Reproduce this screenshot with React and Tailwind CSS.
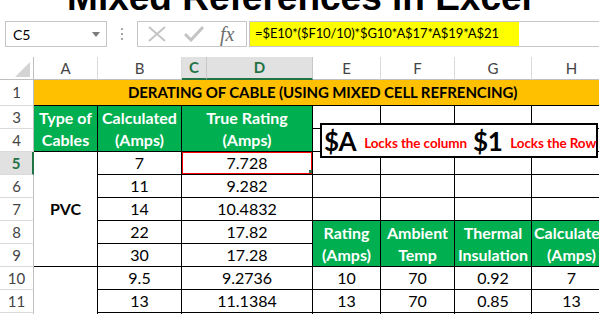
import React from "react"

const cellFont = "font-['Lato',_'Open_Sans',_sans-serif]"

const colLetters = [
  { label: "A", cls: "col-start-2" },
  { label: "B", cls: "col-start-3" },
  { label: "C", cls: "col-start-4", active: true },
  { label: "D", cls: "col-start-5", active: true },
  { label: "E", cls: "col-start-6" },
  { label: "F", cls: "col-start-7" },
  { label: "G", cls: "col-start-8" },
  { label: "H", cls: "col-start-9" },
]

const rowLabels = [
  { label: "1", cls: "row-start-2" },
  { label: "3", cls: "row-start-3" },
  { label: "4", cls: "row-start-4" },
  { label: "5", cls: "row-start-5", active: true },
  { label: "6", cls: "row-start-6" },
  { label: "7", cls: "row-start-7" },
  { label: "8", cls: "row-start-8" },
  { label: "9", cls: "row-start-9" },
  { label: "10", cls: "row-start-10" },
  { label: "11", cls: "row-start-11" },
  { label: "12", cls: "row-start-12" },
]

// rows 5..12 of the data block
const dataRows = [
  { row: "row-start-5", calc: "7", rating: "7.728" },
  { row: "row-start-6", calc: "11", rating: "9.282" },
  { row: "row-start-7", calc: "14", rating: "10.4832" },
  { row: "row-start-8", calc: "22", rating: "17.82" },
  { row: "row-start-9", calc: "30", rating: "17.28" },
  { row: "row-start-10", calc: "9.5", rating: "9.2736" },
  { row: "row-start-11", calc: "13", rating: "11.1384" },
  { row: "row-start-12", calc: "", rating: "" },
]

const rightCols = ["col-start-6", "col-start-7", "col-start-8", "col-start-9"]
const blankRows = ["row-start-3", "row-start-4", "row-start-5", "row-start-6", "row-start-7", "row-start-12"]

const rightHeaders = [
  ["Rating", "(Amps)"],
  ["Ambient", "Temp"],
  ["Thermal", "Insulation"],
  ["Calculated", "(Amps)"],
]

const rightValues = [
  { row: "row-start-10", vals: ["10", "70", "0.92", "7"] },
  { row: "row-start-11", vals: ["13", "70", "0.85", "13"] },
]

const Cell = ({ className = "", children }) => (
  <div
    className={`flex items-center justify-center overflow-hidden whitespace-nowrap border-r border-b border-black text-[16px] text-black ${className}`}
  >
    {children}
  </div>
)

const GreenCell = ({ className = "", lines }) => (
  <Cell className={`flex-col bg-[#00b050] text-[15.5px] font-bold leading-[22px] text-white ${className}`}>
    {lines.map((line) => (
      <span key={line} className="block w-full text-center">
        {line}
      </span>
    ))}
  </Cell>
)

const FormulaBar = () => (
  <div className="mt-[5px] flex h-[26px] items-stretch font-['Lato',_sans-serif]">
    <div className="ml-[5px] flex w-[102px] items-center justify-between border border-[#c6c6c6] pl-[7px] pr-[6px] text-[14px] text-black">
      <span>C5</span>
      <svg width="8" height="5" viewBox="0 0 8 5">
        <polygon points="0,0 8,0 4,5" fill="#7a7a7a" />
      </svg>
    </div>
    <div className="flex w-[30px] flex-col items-center justify-center gap-[3px]">
      <span className="h-[2px] w-[2px] bg-[#a6a6a6]" />
      <span className="h-[2px] w-[2px] bg-[#a6a6a6]" />
      <span className="h-[2px] w-[2px] bg-[#a6a6a6]" />
    </div>
    <div className="flex w-[110px] items-center border border-[#c6c6c6]">
      <svg className="ml-[10px]" width="18" height="16" viewBox="0 0 18 16">
        <path d="M1 1 L17 15 M17 1 L1 15" stroke="#c4c4c4" strokeWidth="2" fill="none" />
      </svg>
      <svg className="ml-[18px]" width="20" height="16" viewBox="0 0 20 16">
        <path d="M1 8 L7 14 L19 1" stroke="#c4c4c4" strokeWidth="3" fill="none" />
      </svg>
      <span className="ml-[16px] font-['Liberation_Serif',_serif] text-[20px] italic leading-none text-[#6e6e6e]">
        fx
      </span>
    </div>
    <div className="ml-[2px] flex flex-1 items-stretch border-y border-l border-[#c6c6c6]">
      <div className="flex w-[269px] items-center overflow-hidden whitespace-nowrap bg-[#ffff00] pl-[5px] text-[13px] tracking-[-0.1px] text-black">
        =$E10*($F10/10)*$G10*A$17*A$19*A$21
      </div>
    </div>
  </div>
)

const App = () => {
  return (
    <div className="relative h-[314px] w-[599px] overflow-hidden bg-white">
      <div className="h-[16px] overflow-hidden">
        <div className="-mt-[21px] text-center font-['Liberation_Sans',_Arial,_sans-serif] text-[37px] font-bold leading-none text-black">
          Mixed References in Excel
        </div>
      </div>

      <FormulaBar />

      <div
        className={`mt-[10px] grid grid-cols-[34px_64px_84px_25px_106px_68px_74px_77px_80px] grid-rows-[23px_26px_repeat(10,23px)] ${cellFont}`}
      >
        {/* corner */}
        <div className="col-start-1 row-start-1 flex items-end justify-end border-r border-b border-[#bfbfbf] pr-[3px] pb-[2px]">
          <svg width="15" height="15" viewBox="0 0 15 15">
            <polygon points="15,0 15,15 0,15" fill="#d4d4d4" />
          </svg>
        </div>

        {colLetters.map((col) => (
          <div
            key={col.label}
            className={`${col.cls} row-start-1 flex items-center justify-center text-[15px] ${
              col.active
                ? "border-r border-b-2 border-r-[#c8c8c8] border-b-[#217346] bg-[#e1e1e1] font-bold text-[#217346]"
                : "border-r border-b border-r-[#dadada] border-b-[#bfbfbf] bg-white text-[#444]"
            }`}
          >
            {col.label}
          </div>
        ))}

        {rowLabels.map((row) => (
          <div
            key={row.label}
            className={`col-start-1 ${row.cls} flex items-center justify-center border-b border-b-[#dadada] text-[15px] ${
              row.active
                ? "border-r-2 border-r-[#217346] bg-[#e1e1e1] font-bold text-[#217346]"
                : "border-r border-r-[#bfbfbf] bg-white text-[#444]"
            }`}
          >
            {row.label}
          </div>
        ))}

        {/* row 1 banner */}
        <div className="col-span-8 col-start-2 row-start-2 flex items-center whitespace-nowrap border-b border-black bg-[#ffc000] pl-[94px] text-[15px] font-bold tracking-[-0.1px] text-black">
          DERATING OF CABLE (USING MIXED CELL REFRENCING)
        </div>

        {/* left table header */}
        <GreenCell className="col-start-2 row-span-2 row-start-3" lines={["Type of", "Cables"]} />
        <GreenCell className="col-start-3 row-span-2 row-start-3" lines={["Calculated", "(Amps)"]} />
        <GreenCell className="col-span-2 col-start-4 row-span-2 row-start-3" lines={["True Rating", "(Amps)"]} />

        <Cell className="col-start-2 row-span-5 row-start-5 font-bold">PVC</Cell>
        <Cell className="col-start-2 row-span-3 row-start-10" />

        {dataRows.map((r, i) => (
          <React.Fragment key={r.row}>
            <Cell className={`col-start-3 ${r.row}`}>{r.calc}</Cell>
            <Cell className={`relative col-span-2 col-start-4 ${r.row}`}>
              {r.rating}
              {i === 0 && (
                <>
                  <span className="absolute -top-[2px] -right-[2px] -bottom-[2px] -left-[2px] z-10 border-[3px] border-[#ff0000]" />
                  <span className="absolute right-[0px] bottom-[1px] z-20 h-[3px] w-[3px] bg-[#217346]" />
                </>
              )}
            </Cell>
          </React.Fragment>
        ))}

        {/* right side grid */}
        {blankRows.map((row) =>
          rightCols.map((col) => <Cell key={row + col} className={`${col} ${row}`} />),
        )}

        {rightHeaders.map((lines, i) => (
          <GreenCell key={lines[0]} className={`${rightCols[i]} row-span-2 row-start-8`} lines={lines} />
        ))}

        {rightValues.map((r) =>
          r.vals.map((v, i) => (
            <Cell key={r.row + i} className={`${rightCols[i]} ${r.row}`}>
              {v}
            </Cell>
          )),
        )}
      </div>

      {/* floating text box */}
      <div
        className={`absolute top-[123px] left-[320px] z-30 flex h-[35px] w-[278px] items-center whitespace-nowrap border-2 border-black bg-white pl-[2px] ${cellFont}`}
      >
        <span className="text-[26px] font-bold leading-none tracking-[-0.5px] text-black">$A</span>
        <span className="ml-[8px] mt-[5px] text-[13.5px] font-bold tracking-[-0.1px] text-[#ff0000]">
          Locks the column
        </span>
        <span className="ml-[6px] text-[26px] font-bold leading-none tracking-[-0.5px] text-black">$1</span>
        <span className="ml-[8px] mt-[5px] text-[13.5px] font-bold tracking-[-0.1px] text-[#ff0000]">
          Locks the Row
        </span>
      </div>
    </div>
  )
}

export default App
